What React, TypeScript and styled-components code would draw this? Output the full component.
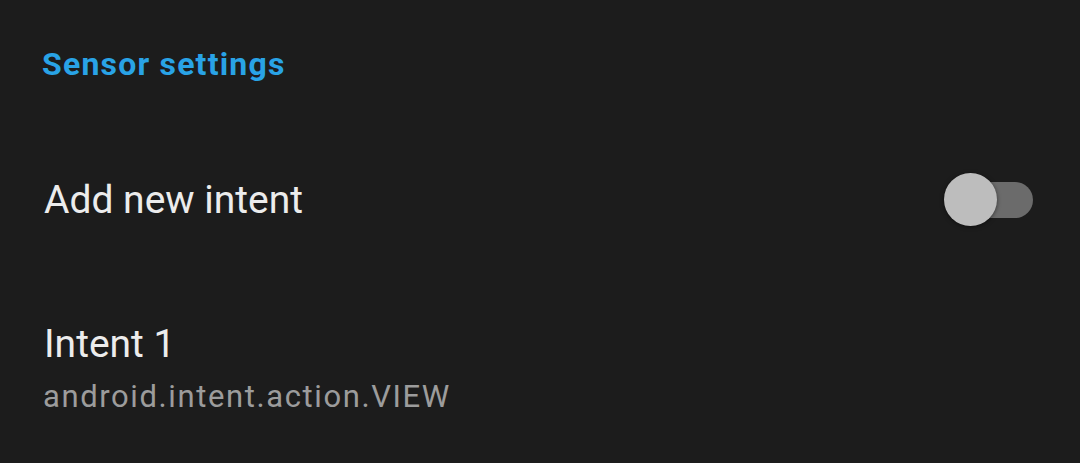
import React from "react";
import styled, { createGlobalStyle } from "styled-components";

const Global = createGlobalStyle`
  html, body { margin: 0; padding: 0; background: #1c1c1c; }
  body { font-family: Roboto, "Noto Sans", sans-serif; -webkit-font-smoothing: antialiased; }
`;

const Screen = styled.div`
  width: 1080px;
  height: 463px;
  background: #1c1c1c;
  display: flex;
  flex-direction: column;
  overflow: hidden;
`;

const CategoryTitle = styled.div`
  color: #29a3e6;
  font-size: 32px;
  font-weight: 700;
  letter-spacing: 1.2px;
  padding: 44px 0 0 42px;
  line-height: 40px;
`;

const Row = styled.div<{ $h: number; $pt?: number }>`
  display: flex;
  align-items: ${(p) => (p.$pt ? "flex-start" : "center")};
  justify-content: space-between;
  padding: ${(p) => p.$pt ?? 0}px 47px 0 44px;
  height: ${(p) => p.$h}px;
  box-sizing: border-box;
`;

const TextCol = styled.div`
  display: flex;
  flex-direction: column;
`;

const Title = styled.div`
  color: #ececec;
  font-size: 39px;
  line-height: 44px;
`;

const Summary = styled.div`
  color: #9c9c9c;
  font-size: 31px;
  line-height: 40px;
  letter-spacing: 1.6px;
  margin-top: 11px;
  margin-left: -1px;
`;

const SwitchWrap = styled.div`
  position: relative;
  width: 89px;
  height: 54px;
`;

const Track = styled.div`
  position: absolute;
  left: 8px;
  right: 0;
  top: 9px;
  height: 36px;
  border-radius: 18px;
  background: #6b6b6b;
`;

const Thumb = styled.div`
  position: absolute;
  left: 0;
  top: 0;
  width: 53px;
  height: 53px;
  border-radius: 50%;
  background: #bdbdbd;
  box-shadow: 0 1px 4px rgba(0, 0, 0, 0.5);
`;

export default function App() {
  return (
    <Screen>
      <Global />
      <CategoryTitle>Sensor settings</CategoryTitle>
      <Row $h={232}>
        <Title>Add new intent</Title>
        <SwitchWrap>
          <Track />
          <Thumb />
        </SwitchWrap>
      </Row>
      <Row $h={147} $pt={6}>
        <TextCol>
          <Title>Intent 1</Title>
          <Summary>android.intent.action.VIEW</Summary>
        </TextCol>
      </Row>
    </Screen>
  );
}
